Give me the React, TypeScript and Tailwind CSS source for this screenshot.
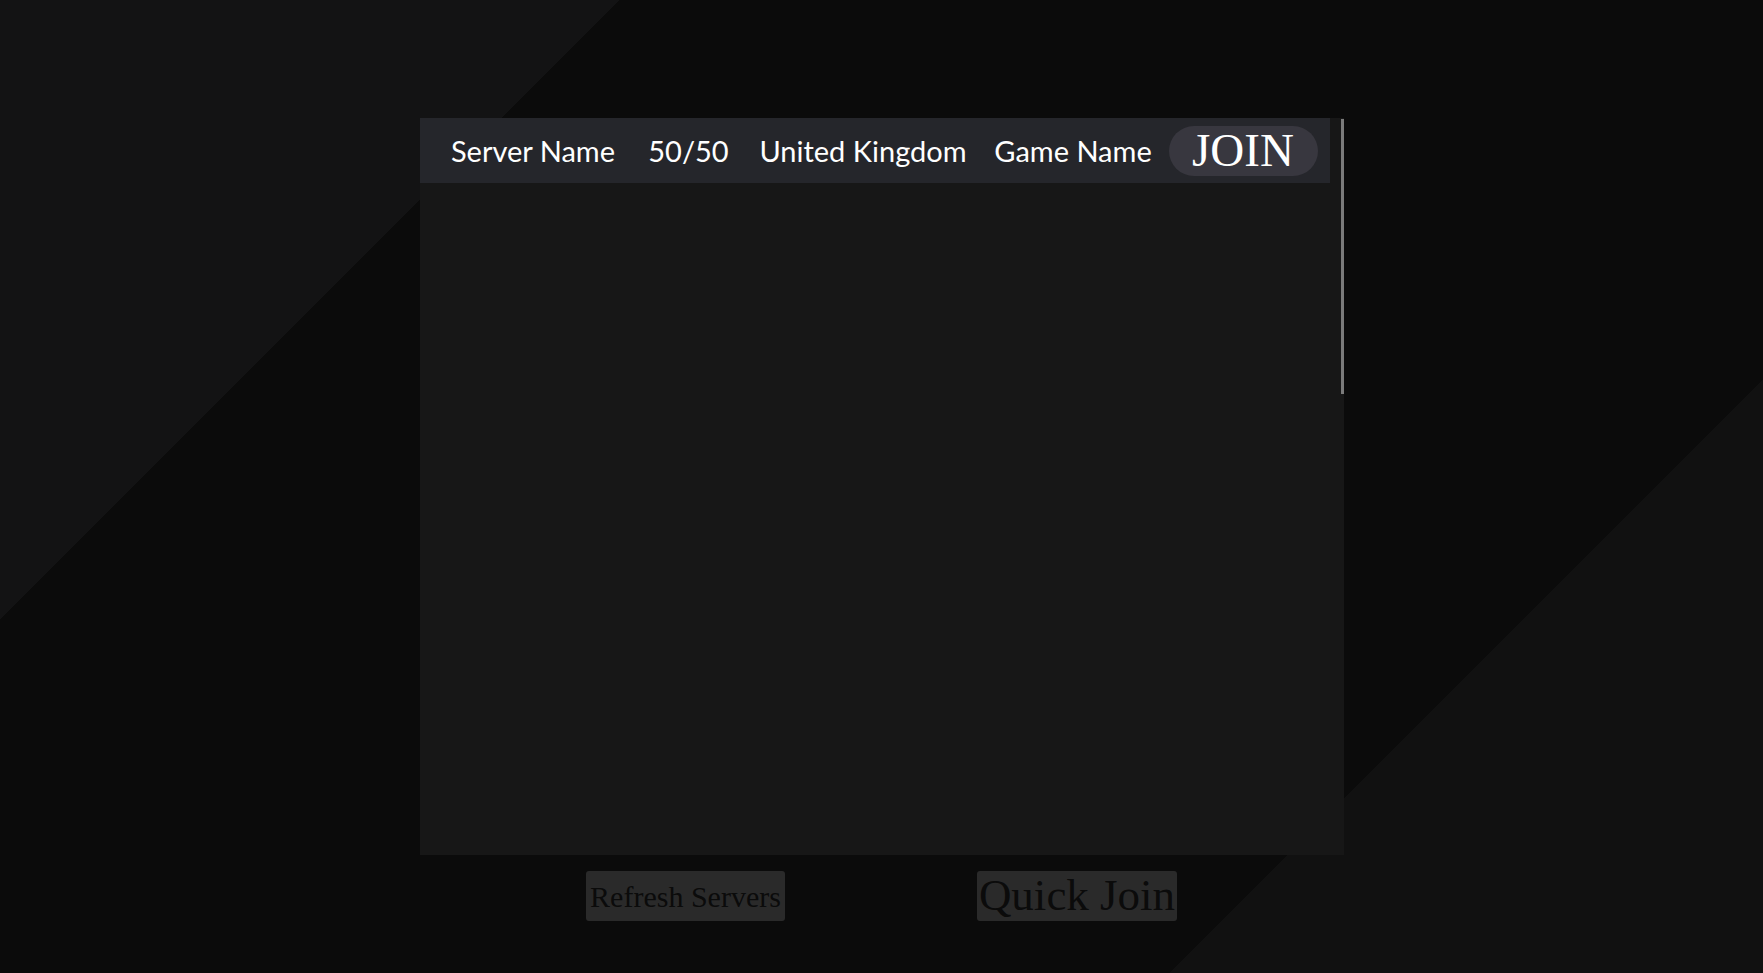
import React from "react";

const sans = { fontFamily: "Lato, 'Noto Sans', sans-serif" };
const serif = { fontFamily: "'Liberation Serif', serif" };

const ServerRow = () => {
  return (
    <div className="flex h-[65px] w-[910px] items-center bg-[#25262b] text-[29px] text-white" style={sans}>
      <div className="flex w-[227px] justify-center whitespace-nowrap">Server Name</div>
      <div className="flex w-[84px] justify-center whitespace-nowrap">50/50</div>
      <div className="flex w-[265px] justify-center whitespace-nowrap">United Kingdom</div>
      <div className="flex w-[155px] justify-center whitespace-nowrap">Game Name</div>
      <button
        className="ml-[18px] flex h-[50px] w-[149px] items-center justify-center rounded-full bg-[#38373f] text-[47px] text-white"
        style={serif}
      >
        JOIN
      </button>
    </div>
  );
};

export default function App() {
  return (
    <div className="flex h-screen w-full flex-col items-center bg-[linear-gradient(135deg,#131314_438px,#0b0b0b_438px,#0b0b0b_1515px,#111111_1515px)] pt-[118px]">
      <div className="flex h-[737px] w-[924px] bg-[#171717]">
        <div className="flex-1">
          <ServerRow />
        </div>
        <div className="w-[3px] pt-px">
          <div className="h-[275px] w-[3px] bg-[#7b7b7b]" />
        </div>
      </div>
      <div className="mt-[16px] flex gap-[192px]">
        <button
          className="flex h-[50px] w-[199px] items-center justify-center rounded-[3px] bg-[#2a2a2a] text-[30px] text-[#0b0b0b] whitespace-nowrap"
          style={serif}
        >
          Refresh Servers
        </button>
        <button
          className="flex h-[50px] w-[200px] items-center justify-center rounded-[3px] bg-[#2a2a2a] text-[45px] text-[#0b0b0b] whitespace-nowrap"
          style={serif}
        >
          Quick Join
        </button>
      </div>
    </div>
  );
}
